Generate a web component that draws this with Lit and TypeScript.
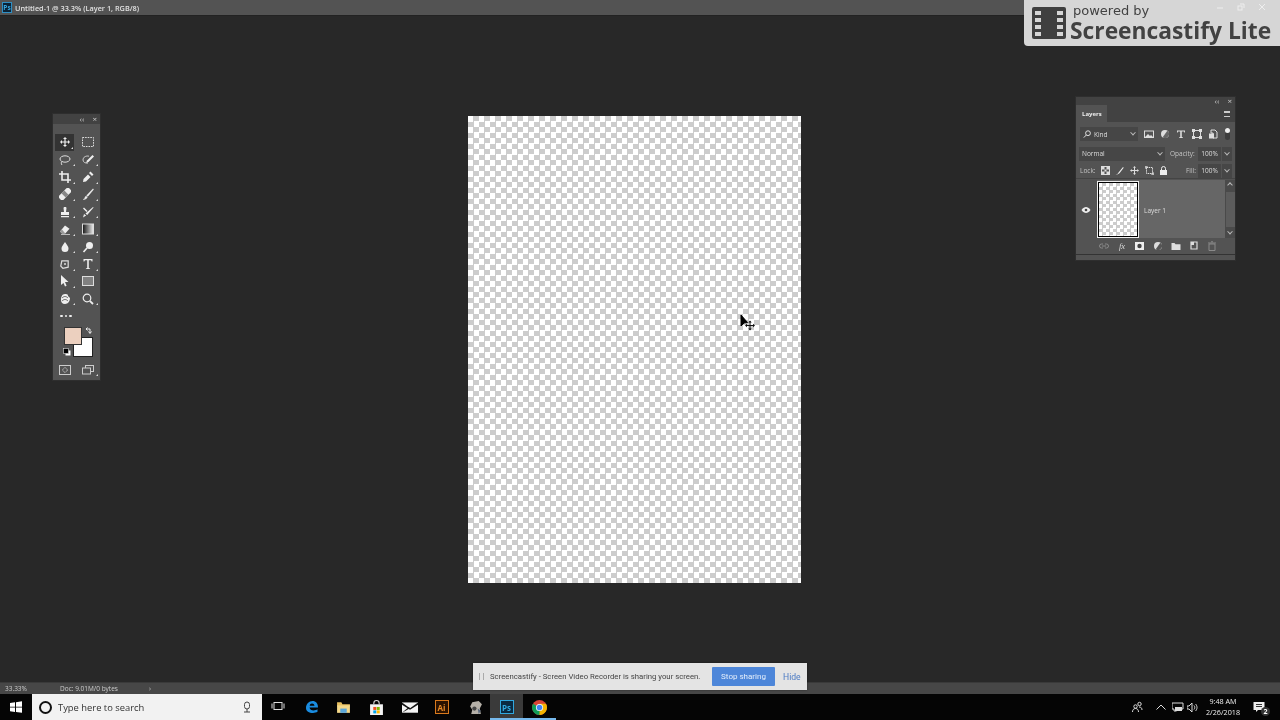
import { LitElement, css, html, svg } from 'lit';
import { customElement } from 'lit/decorators.js';

const i = (body: unknown, size = 12, box = 12) =>
  html`<svg width="${size}" height="${size}" viewBox="0 0 ${box} ${box}">${body}</svg>`;

const tools = [
  svg`<path d="M6 1l2 2H6.600v2.400H9V4l2 2-2 2V6.600H6.600V9H8l-2 2-2-2h1.400V6.600H3V8L1 6l2-2v1.400h2.400V3H4z" fill="#eee"/>`,
  svg`<rect x=".5" y="1.500" width="11" height="9" fill="none" stroke="#ddd" stroke-dasharray="1.600 1"/>`,
  svg`<ellipse cx="6" cy="5" rx="5" ry="3.200" fill="none" stroke="#ddd"/><path d="M3 7.500c-1 1-1 2 0 3.500" fill="none" stroke="#ddd"/>`,
  svg`<path d="M7 2.200C4 1.500 1 3 1 6c0 2.500 3 3.500 5 3" fill="none" stroke="#ccc"/><path d="M4 9l1-2.500L10.500 1 12 2.500 6.500 8z" fill="#eee"/>`,
  svg`<path d="M3 0v9h9M0 3h9v9" fill="none" stroke="#eee" stroke-width="1.600"/>`,
  svg`<path d="M1 11l.5-3L6 3.500 8.500 6 4 10.500zM7 2l1.500-1.500 3 3L10 5z" fill="#eee"/>`,
  svg`<g transform="rotate(-45 6 6)"><rect x="-1" y="3" width="14" height="6" rx="2" fill="#eee"/><rect x="4" y="3" width="4" height="6" fill="#888"/></g>`,
  svg`<path d="M1 11.500c2 0 1.500-2.500 3-3.500l1.300 1.300c-1 2-2.300 2.200-4.300 2.200zM4.600 7.400L11 .8l.6.6-5.800 7z" fill="#eee" stroke="#eee" stroke-width=".4"/>`,
  svg`<path d="M5 1h2l.5 1L7 6h3v3H2V6h3L4.500 2zM2 10h8v1.200H2z" fill="#eee"/>`,
  svg`<path d="M1 11.500l1-3.500 2.200 1.500zM3.500 7.500L11 1l.6.600-6.400 7.400zM2 1.500l3.500 3.500-1 1-3.500-3.500z" fill="#eee"/>`,
  svg`<path d="M1 8.500l5-6 4.500 3.200-4.200 4.800H3z" fill="#eee"/><path d="M1 8.500l2-2 3.300 4H3z" fill="#999"/><path d="M2 11.500h9" stroke="#bbb"/>`,
  svg`<defs><linearGradient id="g"><stop offset="0" stop-color="#111"/><stop offset="1" stop-color="#eee"/></linearGradient></defs><rect x=".5" y="1" width="11" height="10" fill="url(#g)" stroke="#ddd"/>`,
  svg`<path d="M6 1c2 3 3.500 4.500 3.500 6.500a3.500 3.500 0 0 1-7 0C2.500 5.500 4 4 6 1z" fill="#eee"/>`,
  svg`<circle cx="7.500" cy="4.500" r="3.500" fill="#eee"/><path d="M5 7l-3.500 4" stroke="#eee" stroke-width="1.600"/>`,
  svg`<path d="M6 1.500l4.500 4.500-3 4.500h-3l-3-4.500z" fill="none" stroke="#ddd" stroke-width="1.200" transform="rotate(45 6 6)"/><circle cx="6" cy="6" r="1" fill="#ddd"/>`,
  svg`<path d="M1.500 1h9v2.500h-.8L9 2.300H6.800v7.700l1.300.500V11H3.900v-.5L5.200 10V2.300H3L2.300 3.500h-.8z" fill="#eee"/>`,
  svg`<path d="M2 0l7.500 7H6l1.600 3.800-1.600.8L4.500 8 2 10z" fill="#eee"/>`,
  svg`<rect x=".500" y="1.500" width="11" height="9" fill="#808080" stroke="#ddd"/>`,
  svg`<path d="M2 7c0-3 1-6 4-6s3 1 3 2l2 2c0 3-2 6-5 6-3 0-4-2-4-4z" fill="#eee"/><path d="M3 5c2-2 4-2 6 0M3 8c2-2 4-2 6 0" stroke="#666" fill="none"/>`,
  svg`<circle cx="5" cy="5" r="3.800" fill="none" stroke="#eee" stroke-width="1.200"/><path d="M7.800 7.800L11 11" stroke="#eee" stroke-width="1.800"/>`,
];

@customElement('app-root')
export class AppRoot extends LitElement {
  static styles = css`
    :host {
      display: flex;
      flex-direction: column;
      position: relative;
      width: 1280px;
      height: 720px;
      overflow: hidden;
      background: #282828;
      font-family: 'Open Sans', 'Liberation Sans', sans-serif;
      color: #ddd;
      filter: blur(0.3px);
    }
    svg {
      display: block;
      flex: none;
    }

    .title {
      height: 15px;
      flex: none;
      display: flex;
      align-items: center;
      gap: 3px;
      padding-left: 2px;
      background: #535353;
      border-bottom: 1px solid #222;
      font-size: 7.300px;
      font-weight: 600;
      color: #e2e2e2;
    }
    .ps-logo {
      display: flex;
      align-items: center;
      justify-content: center;
      box-sizing: border-box;
      width: 10px;
      height: 11px;
      background: #092338;
      border: 1px solid #2f8fc4;
      color: #39a8e0;
      font-size: 6.500px;
      font-weight: 700;
    }

    .workspace {
      flex: 1;
      position: relative;
    }
    .canvas {
      position: absolute;
      left: 468px;
      top: 100px;
      width: 333px;
      height: 467px;
    }
    .checker {
      background-color: #fff;
      background-image: conic-gradient(
        #ccc 25%,
        #fff 25% 50%,
        #ccc 50% 75%,
        #fff 75%
      );
      background-size: 11px 11px;
    }
    .cursor {
      position: absolute;
      left: 740px;
      top: 299px;
    }

    .tools {
      position: absolute;
      left: 53px;
      top: 98px;
      width: 47px;
      height: 266px;
      background: #535353;
      box-shadow: 0 0 0 1px #2e2e2e;
    }
    .panel-top {
      display: flex;
      justify-content: flex-end;
      align-items: center;
      gap: 8px;
      height: 10px;
      padding-right: 3px;
      background: #424242;
      color: #ccc;
      font-size: 8px;
      line-height: 10px;
    }
    .tool-grid {
      display: grid;
      grid-template-columns: 23px 23px;
      grid-auto-rows: 17.400px;
      padding-top: 9.500px;
    }
    .tool {
      position: relative;
      display: flex;
      align-items: center;
      justify-content: center;
    }
    .tool.on {
      background: #333;
      margin: 0 2px;
    }
    .tool.corner::after {
      content: '';
      position: absolute;
      right: 1px;
      bottom: 2px;
      border: 1.500px solid transparent;
      border-right-color: #ddd;
      border-bottom-color: #ddd;
    }
    .dots {
      grid-column: 1 / span 2;
      height: 17px;
      display: flex;
      align-items: center;
      gap: 2px;
      padding-left: 7px;
    }
    .dots i {
      width: 2.500px;
      height: 2.500px;
      border-radius: 50%;
      background: #eee;
    }
    .swatches {
      position: relative;
      height: 34px;
      margin-top: 2px;
    }
    .bg-color {
      position: absolute;
      left: 21px;
      top: 11px;
      width: 18px;
      height: 18px;
      background: #fff;
      box-shadow: 0 0 0 1px #222;
    }
    .fg-color {
      position: absolute;
      left: 12px;
      top: 1px;
      width: 16px;
      height: 16px;
      background: #ecd0bf;
      box-shadow: 0 0 0 1px #333;
    }
    .swap {
      position: absolute;
      left: 31px;
      top: 0;
    }
    .reset {
      position: absolute;
      left: 10px;
      top: 21px;
    }
    .tool-foot {
      display: grid;
      grid-template-columns: 23px 23px;
      padding-top: 1px;
      height: 16px;
    }

    .layers {
      position: absolute;
      left: 1076px;
      top: 81px;
      width: 159px;
      height: 163px;
      background: #535353;
      box-shadow: 0 0 0 1px #2e2e2e;
      display: flex;
      flex-direction: column;
      font-size: 6.500px;
    }
    .layers .panel-top {
      height: 8px;
      flex: none;
    }
    .tabs {
      display: flex;
      justify-content: space-between;
      height: 17px;
      flex: none;
      background: #424242;
    }
    .tab {
      display: flex;
      align-items: center;
      width: 31px;
      padding-left: 6px;
      box-sizing: border-box;
      background: #535353;
      color: #eee;
      font-size: 6px;
      font-weight: 700;
    }
    .menu {
      width: 6px;
      height: 4px;
      margin: 6px 5px 0 0;
      border-top: 1px solid #ccc;
      border-bottom: 1px solid #ccc;
      box-shadow: inset 0 1px 0 0 #ccc;
    }
    .row {
      display: flex;
      align-items: center;
      flex: none;
    }
    .filter {
      height: 24px;
      padding-left: 4px;
    }
    .blend {
      height: 15px;
      padding-left: 3px;
    }
    .lock {
      height: 18px;
      padding-left: 4px;
      box-sizing: border-box;
      padding-top: 2px;
      border-bottom: 1px solid #444;
    }
    .field {
      display: flex;
      align-items: center;
      justify-content: space-between;
      box-sizing: border-box;
      height: 14px;
      padding: 0 3px;
      background: #464646;
      color: #ddd;
    }
    .kind {
      display: flex;
      align-items: center;
      gap: 3px;
    }
    .chev {
      width: 3px;
      height: 3px;
      border-right: 1px solid #bbb;
      border-bottom: 1px solid #bbb;
      transform: rotate(45deg) translate(-1px, -1px);
    }
    .num {
      margin-left: auto;
      width: 23px;
      justify-content: center;
      padding: 0;
    }
    .arrow {
      width: 10px;
      margin: 0 3px 0 1px;
      justify-content: center;
    }
    .muted {
      color: #c4c4c4;
    }
    .opacity-label {
      margin-left: 5px;
    }
    .fill-label {
      margin-left: auto;
      margin-right: 2px;
    }
    .fill-num {
      margin-left: 0;
    }
    .filter-icons {
      display: flex;
      gap: 6px;
      margin-left: 6px;
    }
    .toggle {
      width: 5px;
      height: 12px;
      margin-left: 7px;
      border-radius: 3px;
      background: #3c3c3c;
      position: relative;
    }
    .toggle::after {
      content: '';
      position: absolute;
      top: 0;
      left: 0;
      width: 5px;
      height: 5px;
      border-radius: 50%;
      background: #eee;
    }
    .lock-icons {
      display: flex;
      gap: 5.700px;
      margin-left: 5px;
    }
    .list {
      display: flex;
      height: 58px;
      flex: none;
      margin-top: 1px;
    }
    .eye {
      width: 20px;
      display: flex;
      align-items: center;
      justify-content: center;
      margin-right: 1px;
      padding-top: 1px;
    }
    .layer {
      flex: 1;
      display: flex;
      align-items: center;
      gap: 6px;
      background: #666;
      color: #ddd;
      padding-left: 1px;
    }
    .layer-name {
      padding-top: 2px;
    }
    .thumb {
      box-sizing: border-box;
      width: 40px;
      height: 55px;
      border: 1px solid #000;
      outline: 1px solid #eee;
      background-size: 7px 7px;
    }
    .scroll {
      width: 10px;
      background: #4a4a4a;
      display: flex;
      flex-direction: column;
      justify-content: space-between;
      align-items: center;
      padding: 3px 0;
      box-sizing: border-box;
    }
    .scroll b {
      width: 9px;
      height: 35px;
      background: #5c5c5c;
    }
    .foot {
      height: 16px;
      flex: none;
      display: flex;
      align-items: center;
      gap: 8px;
      padding-left: 23px;
      background: #535353;
      border-bottom: 1px solid #333;
    }
    .fx {
      width: 8px;
      padding-left: 2px;
      font: italic 8.500px 'Liberation Serif', serif;
      color: #ddd;
    }

    .status {
      height: 12px;
      flex: none;
      display: flex;
      align-items: center;
      background: #474747;
      border-top: 1px solid #3a3a3a;
      box-sizing: border-box;
      font-size: 6.500px;
      color: #ccc;
    }
    .zoom-val {
      width: 55px;
      padding-left: 5px;
      box-sizing: border-box;
    }
    .doc {
      width: 94px;
      padding-left: 5px;
      box-sizing: border-box;
    }

    .taskbar {
      height: 26px;
      flex: none;
      display: flex;
      align-items: center;
      background: #050505;
      color: #eee;
    }
    .start {
      width: 32px;
      display: flex;
      justify-content: center;
    }
    .search {
      width: 230px;
      height: 26px;
      display: flex;
      align-items: center;
      padding: 0 9px 0 7px;
      box-sizing: border-box;
      background: #f2f2f2;
      color: #333;
      font-size: 9.400px;
    }
    .search span {
      flex: 1;
      margin-left: 6px;
    }
    .circle {
      width: 9px;
      height: 9px;
      border: 2px solid #111;
      border-radius: 50%;
    }
    .apps {
      display: flex;
      align-items: stretch;
      height: 26px;
    }
    .app {
      width: 33px;
      display: flex;
      align-items: center;
      justify-content: center;
      box-sizing: border-box;
    }
    .app.open {
      border-bottom: 2px solid #76b9ed;
      border-top: 2px solid transparent;
    }
    .app.active {
      background: #3a3a3a;
    }
    .ai {
      display: flex;
      align-items: center;
      justify-content: center;
      width: 14px;
      height: 14px;
      box-sizing: border-box;
      background: #2a1200;
      border: 1px solid #d9791c;
      color: #e88a26;
      font-size: 8px;
      font-weight: 700;
    }
    .ps-task {
      display: flex;
      align-items: center;
      justify-content: center;
      width: 14px;
      height: 14px;
      box-sizing: border-box;
      background: #0a2a42;
      border: 1px solid #31a8e0;
      color: #31a8e0;
      font-size: 8px;
      font-weight: 700;
    }
    .tray {
      margin-left: auto;
      display: flex;
      align-items: center;
      padding-right: 14px;
    }
    .tray-chev {
      margin-left: 13px;
    }
    .tray-net {
      margin-left: 6px;
    }
    .tray-vol {
      margin-left: 3px;
    }
    .clock {
      width: 46px;
      margin-left: 2px;
      text-align: center;
      font-size: 7.200px;
      line-height: 11px;
      color: #eee;
    }
    .notif {
      position: relative;
      margin-left: 7px;
      margin-right: 1px;
    }
    .notif b {
      position: absolute;
      right: -5px;
      bottom: -3px;
      width: 9px;
      height: 9px;
      border-radius: 50%;
      background: #333;
      color: #fff;
      font-size: 7px;
      line-height: 9px;
      text-align: center;
    }

    .watermark {
      position: absolute;
      right: 0;
      top: 0;
      width: 248px;
      height: 46px;
      padding-left: 8px;
      display: flex;
      align-items: center;
      gap: 4px;
      background: #d6d6d6;
      border-radius: 0 0 0 4px;
      color: #424242;
    }
    .brand {
      display: flex;
      flex-direction: column;
      white-space: nowrap;
    }
    .powered {
      font-family: 'DejaVu Sans', 'Liberation Sans', sans-serif;
      font-size: 13px;
      line-height: 15px;
      margin-left: 3px;
    }
    .lite {
      font-size: 22.800px;
      line-height: 25px;
      font-weight: 700;
    }
    .win-btns {
      position: absolute;
      top: 3px;
      right: 14px;
      display: flex;
      gap: 13px;
    }

    .share {
      position: absolute;
      left: 473px;
      top: 663px;
      width: 334px;
      height: 27px;
      display: flex;
      align-items: center;
      box-sizing: border-box;
      padding-left: 6px;
      background: #e4e4e4;
      box-shadow: 0 0 2px #0006;
      color: #444;
      font-family: Roboto, 'Liberation Sans', sans-serif;
      font-size: 8.600px;
      white-space: nowrap;
    }
    .grip {
      width: 3px;
      height: 7px;
      margin-right: 6px;
      border-left: 1px solid #aaa;
      border-right: 1px solid #aaa;
    }
    .share-text {
      width: 215px;
      font-size: 7.750px;
    }
    .stop {
      display: flex;
      align-items: center;
      justify-content: center;
      width: 63px;
      height: 19px;
      margin-left: 7px;
      border-radius: 1px;
      background: #4d86d9;
      color: #e4eefb;
      font-size: 8px;
    }
    .hide {
      margin-left: 8px;
      color: #4d7cc4;
    }
  `;

  render() {
    const rows = tools.map(
      (t, n) => html`<div class="tool ${n === 0 ? 'on' : ''} ${n === 1 || n === 17 ? '' : 'corner'}">
        ${i(t, 12)}
      </div>`
    );
    return html`
      <div class="title">
        <div class="ps-logo">Ps</div>
        <span>Untitled-1 @ 33.3% (Layer 1, RGB/8)</span>
      </div>

      <div class="workspace">
        <div class="canvas checker"></div>

        <svg class="cursor" width="18" height="18" viewBox="0 0 18 18">
          <path d="M1 0v11l3-3 3.500-.500z" fill="#000" stroke="#000" />
          <path d="M10 6.500v8M6 10.500h8" stroke="#111" />
          <path d="M10 5.500l1.700 2H8.300zM10 15.500l1.700-2H8.300zM5 10.500l2-1.700v3.400zM15 10.500l-2-1.700v3.400z" fill="#111" />
        </svg>

        <div class="tools">
          <div class="panel-top"><span>‹‹</span><span>×</span></div>
          <div class="tool-grid">
            ${rows}
            <div class="dots"><i></i><i></i><i></i></div>
          </div>
          <div class="swatches">
            <div class="bg-color"></div>
            <div class="fg-color"></div>
            <svg class="swap" width="8" height="8" viewBox="0 0 8 8">
              <path d="M2 2h4v4M4.500 4.500L6 6.500l1.500-2M2 2l1.500-1.500M2 2l1.500 1.500" fill="none" stroke="#eee" />
            </svg>
            <svg class="reset" width="8" height="8" viewBox="0 0 8 8">
              <rect x="2.500" y="2.500" width="5" height="5" fill="#fff" />
              <rect x=".5" y=".5" width="5" height="5" fill="#000" stroke="#ddd" stroke-width=".6" />
            </svg>
          </div>
          <div class="tool-foot">
            <div class="tool">
              ${i(
                svg`<rect x=".500" y="1.500" width="11" height="9" fill="none" stroke="#ccc"/><circle cx="6" cy="6" r="2.200" fill="none" stroke="#ccc" stroke-dasharray="1 .6"/>`
              )}
            </div>
            <div class="tool corner">
              ${i(
                svg`<rect x="3.500" y="1.500" width="8" height="6" fill="#535353" stroke="#ccc"/><rect x=".500" y="4" width="8" height="6" fill="#535353" stroke="#ccc"/>`
              )}
            </div>
          </div>
        </div>

        <div class="layers">
          <div class="panel-top"><span>‹‹</span><span>×</span></div>
          <div class="tabs">
            <div class="tab">Layers</div>
            <div class="menu"></div>
          </div>
          <div class="row filter">
            <div class="field" style="width:58px">
              <span class="kind">
                ${i(svg`<circle cx="5" cy="3.200" r="2.400" fill="none" stroke="#ddd"/><path d="M3.300 5L.8 7.600" stroke="#ddd"/>`, 8, 8)}
                Kind
              </span>
              <span class="chev"></span>
            </div>
            <div class="filter-icons">
              ${i(svg`<rect x=".5" y="2" width="9" height="6.500" fill="none" stroke="#ddd"/><path d="M1 8l3-3 2 2 1-1 2 2z" fill="#ddd"/>`, 10, 10)}
              ${i(svg`<circle cx="5" cy="5" r="4" fill="#ddd"/><path d="M5 1a4 4 0 0 1 0 8z" fill="#666" transform="rotate(35 5 5)"/>`, 10, 10)}
              ${i(svg`<path d="M1 1.500h8v2h-.8L8 2.500H5.800v5.500l1.200.500V9H3v-.5L4.200 8V2.500H2L1.800 3.500H1z" fill="#ddd"/>`, 10, 10)}
              ${i(svg`<rect x="1.500" y="1.500" width="7" height="7" fill="none" stroke="#ddd"/><path d="M0 0h3v3H0zM7 0h3v3H7zM0 7h3v3H0zM7 7h3v3H7z" fill="#ddd"/>`, 10, 10)}
              ${i(svg`<path d="M3 4V1h4l2 2v6H5V4z" fill="none" stroke="#ddd"/><rect x="1" y="4.500" width="5" height="5" fill="#ddd"/>`, 10, 10)}
            </div>
            <div class="toggle"></div>
          </div>
          <div class="row blend">
            <div class="field" style="width:86px">
              <span>Normal</span><span class="chev"></span>
            </div>
            <span class="muted opacity-label">Opacity:</span>
            <div class="field num">100%</div>
            <div class="field arrow"><span class="chev"></span></div>
          </div>
          <div class="row lock">
            <span class="muted">Lock:</span>
            <div class="lock-icons">
              ${i(svg`<rect x=".5" y=".5" width="8" height="8" fill="none" stroke="#ddd"/><path d="M1 1h2.500v2.500H1zM5.500 1H8v2.500H5.500zM3.500 3.500h2v2h-2zM1 5.500h2.500V8H1zM5.500 5.500H8V8H5.500z" fill="#ddd"/>`, 9, 9)}
              ${i(svg`<path d="M.5 8.500c1.500 0 2.500-1 3-2L8 1l.7.700L4.700 7C4 8 2 8.800.5 8.500z" fill="#eee"/>`, 9, 9)}
              ${i(svg`<path d="M4.500 0L6 1.800H5V4h2.200V3L9 4.500 7.200 6V5H5v2.200h1L4.500 9 3 7.200h1V5H1.800v1L0 4.500 1.800 3v1H4V1.800H3z" fill="#ddd"/>`, 9, 9)}
              ${i(svg`<rect x="1.500" y="1.500" width="6" height="6" fill="none" stroke="#ddd" stroke-dasharray="1.500 .7"/><path d="M0 1h3M6 8h3M1 0v3M8 6v3" stroke="#ddd"/>`, 9, 9)}
              ${i(svg`<rect x="1" y="4" width="7" height="5" fill="#eee"/><path d="M2.500 4V2.500a2 2 0 0 1 4 0V4" fill="none" stroke="#eee"/>`, 9, 9)}
            </div>
            <span class="muted fill-label">Fill:</span>
            <div class="field num fill-num">100%</div>
            <div class="field arrow"><span class="chev"></span></div>
          </div>
          <div class="list">
            <div class="eye">
              ${i(svg`<path d="M.5 5C2 2.800 3.500 2 5 2s3 .8 4.500 3C8 7.200 6.500 8 5 8S2 7.200.5 5z" fill="#eee"/><circle cx="5" cy="5" r="1.300" fill="#444"/>`, 10, 10)}
            </div>
            <div class="layer">
              <div class="thumb checker"></div>
              <span class="layer-name">Layer 1</span>
            </div>
            <div class="scroll">
              <span class="chev" style="transform:rotate(225deg)"></span>
              <b></b>
              <span class="chev"></span>
            </div>
          </div>
          <div class="foot">
            ${i(svg`<path d="M4 3H2.500a2 2 0 0 0 0 4H4M6 3h1.500a2 2 0 0 1 0 4H6M3 5h4" fill="none" stroke="#8a8a8a"/>`, 10, 10)}
            <span class="fx">fx</span>
            ${i(svg`<rect x="0" y="1" width="9" height="8" fill="#eee"/><circle cx="4.500" cy="5" r="2.200" fill="#444"/>`, 10, 10)}
            ${i(svg`<circle cx="5" cy="5" r="4" fill="#ddd"/><path d="M5 1a4 4 0 0 1 0 8z" fill="#555" transform="rotate(35 5 5)"/>`, 10, 10)}
            ${i(svg`<path d="M.5 2h3l1 1.200h5V9H.5z" fill="#ddd"/>`, 10, 10)}
            ${i(svg`<path d="M2 1h6v7H2z" fill="none" stroke="#ddd" stroke-width="1.200"/><path d="M2 1h3v3H2z" fill="#ddd"/>`, 10, 10)}
            ${i(svg`<path d="M2 3h6v6.500H2zM1 2h8M4 .8h2" fill="none" stroke="#8a8a8a"/>`, 10, 10)}
          </div>
        </div>
      </div>

      <div class="status">
        <div class="zoom-val">33.33%</div>
        <div class="doc">Doc: 9.01M/0 bytes</div>
        <span>›</span>
      </div>

      <div class="taskbar">
        <div class="start">
          ${i(svg`<path d="M0 2l5-.7v4.500H0zM6 1.200L12 .3v5.500H6zM0 6.500h5V11L0 10.300zM6 6.500h6v5.300l-6-.9z" fill="#fff"/>`)}
        </div>
        <div class="search">
          <div class="circle"></div>
          <span>Type here to search</span>
          ${i(svg`<rect x="3.500" y="1" width="5" height="7" rx="2.500" fill="none" stroke="#444"/><path d="M3 11h6M6 8v3" stroke="#444"/>`)}
        </div>
        <div class="apps">
          <div class="app" style="width:31px">
            ${i(svg`<rect x="3" y="2.500" width="8" height="7" fill="none" stroke="#ddd"/><path d="M1 3.500v5M13 3.500v5" stroke="#ddd"/>`, 14, 14)}
          </div>
          <div class="app" style="width:37px">
            ${i(svg`<path d="M1 8c0-4 3-7 6.500-7C11 1 13 3.500 13 7.500H4.500c.3 2 2 3 4 3 1.500 0 3-.5 4-1.200v2.500c-1 .7-3 1.200-4.500 1.200C4 13 1 11.500 1 8zm3.700-2.300H9.500C9.300 4.300 8.300 3.500 7 3.500S5 4.300 4.700 5.700z" fill="#1a8ce0"/>`, 14, 14)}
          </div>
          <div class="app" style="width:26px">
            ${i(svg`<path d="M1 2h4l1 2h7v2H1z" fill="#e8c060"/><path d="M1 5h12v7H1z" fill="#f5d98a"/><rect x="4" y="8" width="6" height="4" fill="#5aa5d8"/>`, 15, 14)}
          </div>
          <div class="app" style="width:40px">
            ${i(svg`<path d="M4.500 4V3a2.500 2.500 0 0 1 5 0v1" fill="none" stroke="#ddd"/><rect x="1" y="4" width="12" height="10" fill="#f4f4f4"/><rect x="4" y="6.500" width="2.800" height="2.800" fill="#f25022"/><rect x="7.200" y="6.500" width="2.800" height="2.800" fill="#7fba00"/><rect x="4" y="9.700" width="2.800" height="2.800" fill="#00a4ef"/><rect x="7.200" y="9.700" width="2.800" height="2.800" fill="#ffb900"/>`, 15, 14)}
          </div>
          <div class="app" style="width:27px">
            ${i(svg`<path d="M0 3h14v9H0z" fill="#f4f4f4"/><path d="M0 3l7 5 7-5v2L7 9.500 0 5z" fill="#111"/><path d="M0 12l6-5 1 1z" fill="#111"/>`, 16, 14)}
          </div>
          <div class="app" style="width:37px"><div class="ai">Ai</div></div>
          <div class="app" style="width:30px">
            ${i(svg`<path d="M4 2l6-1 3 3-2 4 1 5H3l1-4-2-3z" fill="#b5b0a8"/><circle cx="6" cy="8" r="2" fill="#444"/><path d="M9 8l3 2-2 3z" fill="#5c6a80"/>`, 15, 14)}
          </div>
          <div class="app open active" style="width:33px"><div class="ps-task">Ps</div></div>
          <div class="app open" style="width:33px">
            <svg width="15" height="15" viewBox="0 0 16 16">
              <circle cx="8" cy="8" r="8" fill="#db4437" />
              <path d="M8 8L1.100 4A8 8 0 0 0 8 16l4-7z" fill="#0f9d58" />
              <path d="M8 16a8 8 0 0 0 6.900-12H8z" fill="#f4b400" />
              <circle cx="8" cy="8" r="3.800" fill="#fff" />
              <circle cx="8" cy="8" r="3" fill="#4285f4" />
            </svg>
          </div>
        </div>
        <div class="tray">
          ${i(svg`<circle cx="4.500" cy="5.500" r="1.700" fill="none" stroke="#ddd"/><circle cx="8.500" cy="3" r="1.700" fill="none" stroke="#ddd"/><path d="M1.500 11c0-2 1-3.500 3-3.500s3 1.500 3 3.500M8 6c2 0 3 1 3 3" fill="none" stroke="#ddd"/>`)}
          <svg class="tray-chev" width="10" height="6" viewBox="0 0 10 6">
            <path d="M.5 5.500L5 1l4.500 4.500" fill="none" stroke="#ddd" />
          </svg>
          <svg class="tray-net" width="12" height="12" viewBox="0 0 12 12">
            <path d="M0 2h11v6H4.500v2H2V8H0z" fill="none" stroke="#ddd" />
            <rect x="3" y="6" width="7" height="4" fill="#ddd" />
          </svg>
          <svg class="tray-vol" width="11" height="11" viewBox="0 0 11 11">
            <path d="M0 4h2l3-3v9L2 7H0z" fill="none" stroke="#ddd" />
            <path d="M7 3.500c1 1 1 3 0 4M8.500 2c2 2 2 5 0 7" fill="none" stroke="#ddd" />
          </svg>
          <div class="clock">9:48 AM<br />2/26/2018</div>
          <div class="notif">
            ${i(svg`<path d="M.5 1h11v8H5L3 11V9H.5z" fill="#eee"/><path d="M3 3.500h6M3 5.500h6" stroke="#333"/>`)}
            <b>2</b>
          </div>
        </div>
      </div>

      <div class="watermark">
        <svg width="34" height="32" viewBox="0 0 34 32">
          <rect width="34" height="32" rx="2" fill="#3f3f3f" />
          <path d="M3 4h6v4H3zM3 11h6v4H3zM3 18h6v4H3zM3 25h6v4H3zM25 4h6v4h-6zM25 11h6v4h-6zM25 18h6v4h-6zM25 25h6v4h-6z" fill="#d6d6d6" />
        </svg>
        <div class="brand">
          <span class="powered">powered by</span>
          <span class="lite">Screencastify Lite</span>
        </div>
        <div class="win-btns">
          ${i(svg`<path d="M1 5h6" stroke="#eee"/>`, 8, 8)}
          ${i(svg`<rect x="1" y="3" width="4" height="4" fill="none" stroke="#eee"/><path d="M3 1h4v4" fill="none" stroke="#eee"/>`, 8, 8)}
          ${i(svg`<path d="M1 1l6 6M7 1L1 7" stroke="#eee"/>`, 8, 8)}
        </div>
      </div>

      <div class="share">
        <div class="grip"></div>
        <span class="share-text">Screencastify - Screen Video Recorder is sharing your screen.</span>
        <div class="stop">Stop sharing</div>
        <span class="hide">Hide</span>
      </div>
    `;
  }
}
